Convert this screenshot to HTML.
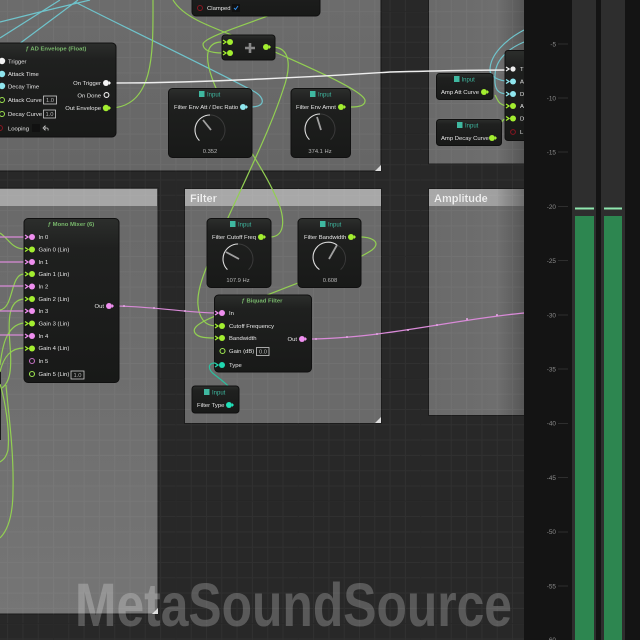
<!DOCTYPE html>
<html><head><meta charset="utf-8"><style>
html,body{margin:0;padding:0;background:#282828;overflow:hidden}
svg{display:block;position:absolute;left:0;top:0;filter:blur(.3px)}
text{font-family:"Liberation Sans",sans-serif}
.t{font-size:5.9px;fill:#e6e6e6}
.e{text-anchor:end}.m{text-anchor:middle}
.g{font-size:5.9px;fill:#79b86c;font-weight:bold}
.i{font-size:6px;fill:#3fb8a0}
.v{font-size:5.8px;fill:#b8b8b8;text-anchor:middle}
.n{fill:url(#nd);stroke:#101010;stroke-width:1}
.w{fill:none;stroke-width:1.2}
.gr{stroke:#92cf52}.cy{stroke:#6fc4cc}.pk{stroke:#d98ad8}
.sc{font-size:6.4px;fill:#8a8a8a;text-anchor:end}
.h{font-size:11px;font-weight:bold;fill:#f0f0f0;filter:drop-shadow(.7px .7px 0 #555)}
.box{fill:none;stroke:#ccc;stroke-width:.8}
.ch{fill:none;stroke-width:1.3}
.kd{fill:none;stroke:#3a3a3a;stroke-width:1}
.kb{fill:none;stroke:#ddd;stroke-width:1.1}
.kp{stroke:#a0a0a0;stroke-width:1.8}
</style></head><body>
<svg width="640" height="640" viewBox="0 0 640 640" xmlns="http://www.w3.org/2000/svg">
<defs>
<pattern id="mi" width="15.3" height="15.3" patternUnits="userSpaceOnUse" x="7.1" y="11.2"><path d="M.5 0V15.3M0 .5H15.3" fill="none" stroke="#fff" stroke-opacity=".04" stroke-width="1"/></pattern>
<pattern id="ma" width="122.4" height="122.4" patternUnits="userSpaceOnUse" x="53" y="11"><path d="M.5 0V122.4M0 .5H122.4" fill="none" stroke="#000" stroke-opacity=".2" stroke-width="1"/></pattern>
<linearGradient id="nd" x1="0" y1="0" x2="0" y2="1"><stop offset="0" stop-color="#2c2e2c"/><stop offset=".18" stop-color="#1f201f"/><stop offset="1" stop-color="#181918"/></linearGradient>
<linearGradient id="cb" x1="0" y1="0" x2="0" y2="1"><stop offset="0" stop-color="#6c6c6c"/><stop offset="1" stop-color="#666"/></linearGradient>
<linearGradient id="cl" x1="0" y1="0" x2="0" y2="1"><stop offset="0" stop-color="#696969"/><stop offset="1" stop-color="#757575"/></linearGradient>
<linearGradient id="cr" x1="0" y1="0" x2="1" y2="0"><stop offset="0" stop-color="#6a6a6a"/><stop offset=".7" stop-color="#6e6e6e"/><stop offset="1" stop-color="#525252"/></linearGradient>
<linearGradient id="hr" x1="0" y1="0" x2="1" y2="0"><stop offset="0" stop-color="#a8a8a8"/><stop offset=".7" stop-color="#a0a0a0"/><stop offset="1" stop-color="#6e6e6e"/></linearGradient>
</defs>

<rect width="640" height="640" fill="#282828"/>
<rect width="640" height="640" fill="url(#ma)"/>

<!-- comment boxes -->
<rect x="-2" y="-2" width="383" height="173" fill="url(#cb)" stroke="#161616"/>
<rect x="428.500" y="-2" width="100" height="166" fill="url(#cr)" stroke="#1c1c1c"/>
<rect x="-2" y="188" width="160" height="426" fill="url(#cl)" stroke="#1c1c1c"/>
<rect x="184.500" y="188.500" width="197" height="235" fill="#6a6a6a" stroke="#1c1c1c"/>
<rect x="428.500" y="188.500" width="100" height="227" fill="url(#cr)" stroke="#1c1c1c"/>
<rect x="0" y="189" width="157" height="17" fill="#a6a6a6"/>
<rect x="185" y="189" width="196" height="17" fill="#a8a8a8"/>
<rect x="429" y="189" width="95" height="17" fill="url(#hr)"/>
<rect width="640" height="640" fill="url(#mi)"/>
<path d="M381 165V171H375Z M381 417V423H375Z M158 608V614H152Z" fill="#ddd"/>
<text x="190" y="202" class="h">Filter</text>
<text x="434" y="202" class="h">Amplitude</text>
<rect x="-3" y="370" width="4" height="70" fill="#1a1a1a"/>

<!-- wires under nodes -->
<g class="w cy">
<path d="M0 22L40 12L90 0"/><path d="M0 38L60 0"/><path d="M3 56L78 0"/>
<path d="M75 2C130 30 210 68 255 92C265 98 266 107 250 107"/>
<path d="M524 30C505 40 490 55 490 70C490 76 498 81 508 81"/><path d="M524 42C505 50 495 62 495 76C494 90 498 94 508 94"/>
</g>
<g class="w gr">
<path d="M153 0C153 50 155 105 112 108"/>
<path d="M173 0C185 20 215 28 275 52C310 68 362 90 365 100C366 108 352 107 345 107"/>
<path d="M307 0C270 18 205 35 203 44C203 52 215 53 223 53"/>
<path d="M222 42C205 42 205 58 212 78C225 115 262 165 275 195C285 215 287 237 270 237"/>
<path d="M272 47C290 47 292 65 283 90C270 130 245 180 227 220C212 255 196 285 198 305C199 318 205 326 216 326"/>
<path d="M355 237C372 236 382 242 372 250C350 265 290 285 240 306C210 318 190 325 195 333C198 338 208 338 216 338"/>
<path d="M0 233C8 238 12 249 24 249"/>
<path d="M24 274C10 274 14 308 0 310"/>
<path d="M24 299C8 300 8 320 10 345C12 370 10 382 2 388"/>
<path d="M24 323C5 325 2 350 0 365"/>
<path d="M24 348C12 348 4 355 0 372"/>
<path d="M6 385C8 410 14 450 13 490C13 515 8 530 0 538"/>
<path d="M0 384C5 400 10 430 8 450C6 458 3 460 0 462"/>
<path d="M495 95C498 100 498 105 508 106"/><path d="M501 123C503 120 503 119 508 119"/>
</g>
<path fill="none" stroke="#eee" stroke-width="1.4" d="M112 83C200 83 330 76 390 72C430 71 470 70 508 70"/>
<path class="w pk" d="M0 237H24M0 262H24M0 286H24M0 311H24M0 335H24"/>
<path class="w pk" d="M113 306C150 306 190 313 216 313"/>
<path class="w pk" d="M306 339C380 339 450 320 524 313"/>
<g fill="#e8a8e8"><circle cx="124" cy="306" r="1"/><circle cx="154" cy="308" r="1"/><circle cx="185" cy="311" r="1"/><circle cx="316" cy="339" r="1"/><circle cx="347" cy="337" r="1"/><circle cx="377" cy="334" r="1"/><circle cx="408" cy="330" r="1"/><circle cx="437" cy="325" r="1"/><circle cx="467" cy="319" r="1"/><circle cx="497" cy="315" r="1"/></g>

<!-- AD Envelope -->
<rect class="n" x="-6" y="43" width="122" height="94" rx="4"/>
<text x="56" y="50.500" class="g m">ƒ AD Envelope (Float)</text>
<g class="t"><text x="8" y="63.500">Trigger</text><text x="8" y="76">Attack Time</text><text x="8" y="88.500">Decay Time</text><text x="8" y="102">Attack Curve</text><text x="8" y="116">Decay Curve</text><text x="8" y="130.500">Looping</text>
<text x="101" y="85" class="e">On Trigger</text><text x="101" y="97.500" class="e">On Done</text><text x="101" y="110" class="e">Out Envelope</text></g>
<rect class="box" x="43.500" y="96" width="13" height="8"/><text x="50" y="102" class="v">1.0</text>
<rect class="box" x="43.500" y="110" width="12" height="8"/><text x="49.500" y="116" class="v">1.0</text>
<rect x="32" y="124" width="8" height="8" fill="#111"/>
<path d="M43 128L45 126V130ZM45 128H47Q48.500 128 48 130.500" fill="none" stroke="#ccc" stroke-width=".8"/>
<circle cx="2" cy="61" r="3.200" fill="#f2f2f2"/><circle cx="2" cy="74" r="3.200" fill="#8fe6ee"/><circle cx="2" cy="86" r="3.200" fill="#8fe6ee"/>
<circle cx="2" cy="100" r="2.500" fill="none" stroke="#9be24e"/><circle cx="2" cy="114" r="2.500" fill="none" stroke="#9be24e"/><circle cx="0" cy="128" r="2.500" fill="none" stroke="#8a1520"/>
<circle cx="106" cy="83" r="3" fill="#f5f5f5"/><path d="M109 81L111 83L109 85Z" fill="#f5f5f5"/>
<circle cx="106.500" cy="95" r="2.400" fill="none" stroke="#eee" stroke-width="1.100"/>
<circle cx="106" cy="108" r="3.200" fill="#a3ee30"/><path d="M109 106L111 108L109 110Z" fill="#a3ee30"/>

<!-- Clamped top node -->
<rect class="n" x="192" y="-20" width="128" height="36" rx="4"/>
<circle cx="200" cy="8" r="2.500" fill="none" stroke="#8a1520"/>
<text x="207" y="10" class="t">Clamped</text>
<rect x="232" y="4" width="8" height="8" fill="#111"/><path d="M234 8L235.500 9.500L238 6" stroke="#2f8fef" fill="none"/>

<!-- Plus node -->
<rect class="n" x="222" y="35" width="53" height="25" rx="3"/>
<path d="M250 43V53M245 48H255" stroke="#888" stroke-width="2.600"/>
<g fill="#a3ee30"><circle cx="230" cy="42" r="3"/><circle cx="230" cy="53" r="3"/><circle cx="266" cy="47" r="3"/><path d="M269 45L271 47L269 49Z"/></g>
<path class="ch" d="M223 40L226 42L223 44M223 51L226 53L223 55" stroke="#a3ee30"/>

<!-- Filter Env Att node -->
<rect class="n" x="168.500" y="88.500" width="83.500" height="69" rx="4"/>
<rect x="199" y="91" width="5.500" height="6" fill="#3fb8a0"/><text x="207" y="96.500" class="i">Input</text>
<text x="174" y="109" class="t">Filter Env Att / Dec Ratio</text>
<circle cx="243" cy="107" r="3" fill="#8fe6ee"/><path d="M246 105L248 107L246 109Z" fill="#8fe6ee"/>
<path class="kd" d="M210 115A15 15 0 0 1 220.600 140.600"/>
<path class="kb" d="M199.400 140.600A15 15 0 0 1 210 115"/>
<path class="kp" d="M203 120L211 130"/>
<text x="210" y="153" class="v">0.352</text>

<!-- Filter Env Amnt node -->
<rect class="n" x="291" y="88.500" width="59.500" height="69" rx="4"/>
<rect x="310" y="91" width="5.500" height="6" fill="#3fb8a0"/><text x="318" y="96.500" class="i">Input</text>
<text x="296" y="109" class="t">Filter Env Amnt</text>
<circle cx="341" cy="107" r="3" fill="#a3ee30"/><path d="M344 105L346 107L344 109Z" fill="#a3ee30"/>
<path class="kd" d="M320 114A15 15 0 0 1 330.600 139.600"/>
<path class="kb" d="M309.400 139.600A15 15 0 0 1 320 114"/>
<path class="kp" d="M317 117L321 130"/>
<text x="320" y="153" class="v">374.1 Hz</text>

<!-- Amp nodes -->
<rect class="n" x="436.500" y="73.500" width="56.500" height="26" rx="3"/>
<rect x="454" y="76" width="5.500" height="6" fill="#3fb8a0"/><text x="461.500" y="81.500" class="i">Input</text>
<text x="441" y="94" class="t">Amp Att Curve</text>
<circle cx="484" cy="92" r="3" fill="#a3ee30"/><path d="M487 90L489 92L487 94Z" fill="#a3ee30"/>
<rect class="n" x="436.500" y="119.500" width="65" height="26" rx="3"/>
<rect x="457" y="122" width="5.500" height="6" fill="#3fb8a0"/><text x="465" y="127.500" class="i">Input</text>
<text x="441" y="140" class="t">Amp Decay Curve</text>
<circle cx="492" cy="138" r="3" fill="#a3ee30"/><path d="M495 136L497 138L495 140Z" fill="#a3ee30"/>
<rect class="n" x="505" y="50.500" width="30" height="90" rx="3"/>
<circle cx="513" cy="69" r="2.600" fill="#eee"/><circle cx="513" cy="81.500" r="3" fill="#8fe6ee"/><circle cx="513" cy="94" r="3" fill="#8fe6ee"/><circle cx="513" cy="106" r="3" fill="#a3ee30"/><circle cx="513" cy="118.500" r="3" fill="#a3ee30"/><circle cx="513" cy="132" r="2.400" fill="none" stroke="#8a1520"/>
<path class="ch" d="M506 67L509 69L506 71" stroke="#eee"/><path class="ch" d="M506 79.500L509 81.500L506 83.500M506 92L509 94L506 96" stroke="#8fe6ee"/><path class="ch" d="M506 104L509 106L506 108M506 116.500L509 118.500L506 120.500" stroke="#a3ee30"/>
<g class="t"><text x="520" y="71">T</text><text x="520" y="83.500">A</text><text x="520" y="96">D</text><text x="520" y="108">A</text><text x="520" y="120.500">D</text><text x="520" y="134">L</text></g>

<!-- Mono mixer -->
<rect class="n" x="24" y="218.500" width="95" height="164" rx="4"/>
<text x="71" y="226" class="g m">ƒ Mono Mixer (6)</text>
<g class="t"><text x="38.500" y="239">In 0</text><text x="38.500" y="251.500">Gain 0 (Lin)</text><text x="38.500" y="264">In 1</text><text x="38.500" y="276">Gain 1 (Lin)</text><text x="38.500" y="288.500">In 2</text><text x="38.500" y="301">Gain 2 (Lin)</text><text x="38.500" y="313">In 3</text><text x="38.500" y="325.500">Gain 3 (Lin)</text><text x="38.500" y="338">In 4</text><text x="38.500" y="350">Gain 4 (Lin)</text><text x="38.500" y="363">In 5</text><text x="38.500" y="376">Gain 5 (Lin)</text>
<text x="104" y="308" class="e">Out</text></g>
<g fill="#ef8fef"><circle cx="32" cy="237" r="3"/><circle cx="32" cy="262" r="3"/><circle cx="32" cy="286.500" r="3"/><circle cx="32" cy="311" r="3"/><circle cx="32" cy="336" r="3"/><circle cx="109" cy="306" r="3"/><path d="M112 304L114 306L112 308Z"/></g>
<g fill="#a3ee30"><circle cx="32" cy="249.500" r="3"/><circle cx="32" cy="274" r="3"/><circle cx="32" cy="299" r="3"/><circle cx="32" cy="323.500" r="3"/><circle cx="32" cy="348.500" r="3"/></g>
<path class="ch" d="M25 235L28 237L25 239M25 260L28 262L25 264M25 284.500L28 286.500L25 288.500M25 309L28 311L25 313M25 334L28 336L25 338" stroke="#ef8fef"/>
<path class="ch" d="M25 247.500L28 249.500L25 251.500M25 272L28 274L25 276M25 297L28 299L25 301M25 321.500L28 323.500L25 325.500M25 346.500L28 348.500L25 350.500" stroke="#a3ee30"/>
<circle cx="32" cy="361" r="2.500" fill="none" stroke="#c070c0" stroke-width="1.100"/>
<circle cx="32" cy="374" r="2.500" fill="none" stroke="#9be24e" stroke-width="1.100"/>
<rect class="box" x="71" y="371" width="13" height="8"/><text x="77.500" y="377" class="v">1.0</text>

<!-- Cutoff -->
<rect class="n" x="207" y="218.500" width="64" height="69" rx="4"/>
<rect x="230" y="221" width="5.500" height="6" fill="#3fb8a0"/><text x="238" y="226.500" class="i">Input</text>
<text x="212" y="239" class="t">Filter Cutoff Freq</text>
<circle cx="261" cy="237" r="3" fill="#a3ee30"/><path d="M264 235L266 237L264 239Z" fill="#a3ee30"/>
<path class="kd" d="M238 244A15 15 0 0 1 248.600 269.600"/>
<path class="kb" d="M227.400 269.600A15 15 0 0 1 238 244"/>
<path class="kp" d="M226 252L239 259"/>
<text x="238" y="282" class="v">107.9 Hz</text>

<!-- Bandwidth -->
<rect class="n" x="298" y="218.500" width="63" height="69" rx="4"/>
<rect x="320" y="221" width="5.500" height="6" fill="#3fb8a0"/><text x="328" y="226.500" class="i">Input</text>
<text x="304" y="239" class="t">Filter Bandwidth</text>
<circle cx="351" cy="237" r="3" fill="#a3ee30"/><path d="M354 235L356 237L354 239Z" fill="#a3ee30"/>
<path class="kd" d="M337 245A15 15 0 0 1 340.600 269.600"/>
<path class="kb" d="M319.400 269.600A15 15 0 0 1 337 245"/>
<path class="kp" d="M337 245L329 259"/>
<text x="330" y="282" class="v">0.608</text>

<!-- Biquad -->
<rect class="n" x="214.500" y="295" width="97" height="77" rx="4"/>
<text x="262" y="302.500" class="g m">ƒ Biquad Filter</text>
<g class="t"><text x="229" y="315">In</text><text x="229" y="328">Cutoff Frequency</text><text x="229" y="340">Bandwidth</text><text x="229" y="353">Gain (dB)</text><text x="229" y="367">Type</text><text x="297" y="341" class="e">Out</text></g>
<rect class="box" x="256.500" y="347.500" width="12.500" height="8"/><text x="263" y="353.500" class="v">0.0</text>
<circle cx="222" cy="313" r="3" fill="#ef8fef"/><path class="ch" d="M215 311L218 313L215 315" stroke="#ef8fef"/>
<circle cx="222" cy="326" r="3" fill="#a3ee30"/><circle cx="222" cy="338" r="3" fill="#a3ee30"/><path class="ch" d="M215 324L218 326L215 328M215 336L218 338L215 340" stroke="#a3ee30"/>
<circle cx="222.500" cy="351" r="2.500" fill="none" stroke="#9be24e" stroke-width="1.100"/>
<circle cx="222" cy="365" r="3" fill="#20d8b0"/><path class="ch" d="M215 363L218 365L215 367" stroke="#20d8b0"/>
<circle cx="302" cy="339" r="3" fill="#ef8fef"/><path d="M305 337L307 339L305 341Z" fill="#ef8fef"/>

<!-- Filter Type -->
<path class="w" stroke="#2bbf9e" d="M215 363C207 363 208 370 215 375C228 385 240 395 239 405"/>
<rect class="n" x="192" y="386" width="47" height="27" rx="3"/>
<rect x="204" y="389" width="5.500" height="6" fill="#3fb8a0"/><text x="212" y="394.500" class="i">Input</text>
<text x="197" y="407" class="t">Filter Type</text>
<circle cx="229" cy="405" r="3" fill="#20e0b8"/><path d="M232 403L234 405L232 407Z" fill="#20e0b8"/>

<!-- watermark -->
<text x="75" y="626" font-size="61" font-weight="bold" fill="#fff" fill-opacity=".23" textLength="437" lengthAdjust="spacingAndGlyphs">MetaSoundSource</text>

<!-- right panel -->
<rect x="524" y="0" width="116" height="640" fill="#141414"/>
<rect x="572" y="0" width="24" height="640" fill="#2e2e2e"/>
<rect x="601" y="0" width="24" height="640" fill="#2e2e2e"/>
<rect x="575" y="216" width="19" height="424" fill="#2d8650"/>
<rect x="604" y="216" width="18" height="424" fill="#2d8650"/>
<rect x="575" y="207.500" width="19" height="2" fill="#8fe6ae"/>
<rect x="604" y="207.500" width="18" height="2" fill="#8fe6ae"/>
<g class="sc"><text x="556" y="46.500">-5</text><text x="556" y="100.500">-10</text><text x="556" y="154.500">-15</text><text x="556" y="209">-20</text><text x="556" y="263">-25</text><text x="556" y="317.500">-30</text><text x="556" y="371.500">-35</text><text x="556" y="425.500">-40</text><text x="556" y="480">-45</text><text x="556" y="534">-50</text><text x="556" y="588.500">-55</text><text x="556" y="642">-60</text></g>
<path d="M558 44H568M558 98H568M558 152H568M558 206.500H568M558 260.500H568M558 315H568M558 369H568M558 423.500H568M558 477.500H568M558 532H568M558 586H568" stroke="#2e2e2e"/>
</svg>
</body></html>
